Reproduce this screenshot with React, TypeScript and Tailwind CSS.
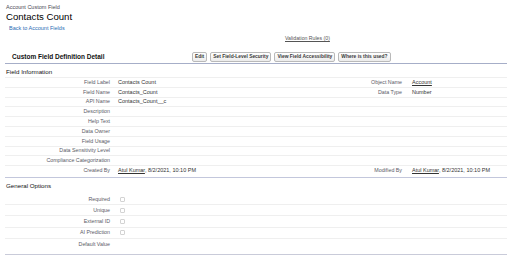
import React from 'react'

type Row = { label: string; value?: React.ReactNode; rlabel?: string; rvalue?: React.ReactNode }

const fieldRows: Row[] = [
  { label: 'Field Label', value: 'Contacts Count', rlabel: 'Object Name', rvalue: <span className="underline">Account</span> },
  { label: 'Field Name', value: 'Contacts_Count', rlabel: 'Data Type', rvalue: 'Number' },
  { label: 'API Name', value: 'Contacts_Count__c' },
  { label: 'Description' },
  { label: 'Help Text' },
  { label: 'Data Owner' },
  { label: 'Field Usage' },
  { label: 'Data Sensitivity Level' },
  { label: 'Compliance Categorization' },
  {
    label: 'Created By',
    value: <><span className="underline">Atul Kumar</span>, 8/2/2021, 10:10 PM</>,
    rlabel: 'Modified By',
    rvalue: <><span className="underline">Atul Kumar</span>, 8/2/2021, 10:10 PM</>,
  },
]

const optionRows = ['Required', 'Unique', 'External ID', 'AI Prediction', 'Default Value']

function Btn({ children }: { children: React.ReactNode }) {
  return (
    <button className="h-[10px] px-[2px] text-[4.9px] leading-[8px] font-bold text-[#3a3a3a] border border-[#b9b9b9] rounded-[2px] bg-gradient-to-b from-[#ffffff] to-[#ececec]">
      {children}
    </button>
  )
}

export default function App() {
  return (
    <div className="w-[512px] h-[256px] overflow-hidden bg-white font-['Liberation_Sans',Arial,sans-serif] text-black pt-[4px]">
      <div className="pl-[6px] text-[5.5px] leading-[6px] text-[#4a4a56]">Account Custom Field</div>
      <div className="pl-[6px] mt-[1px] text-[9.6px] leading-[11px]">Contacts Count</div>
      <div className="pl-[9px] mt-[2.5px] text-[5.5px] leading-[6px] text-[#2a6bb3]">Back to Account Fields</div>
      <div className="pl-[285px] mt-[4.5px] text-[5.2px] leading-[6px] text-[#555] underline">Validation Rules (0)</div>

      <div className="mx-[5px] mt-[9px]">
        <div className="flex items-center h-[14px] border-b border-[#a6aec8]">
          <div className="w-[187px] pl-[7px] text-[6.5px] font-bold leading-[8px] text-[#111]">Custom Field Definition Detail</div>
          <div className="flex gap-[3px]">
            <Btn>Edit</Btn>
            <Btn>Set Field-Level Security</Btn>
            <Btn>View Field Accessibility</Btn>
            <Btn>Where is this used?</Btn>
          </div>
        </div>

        <div className="pl-[1px] mt-[4px] text-[6.2px] leading-[8px] text-[#111]">Field Information</div>
        <div className="mt-[1px]">
          {fieldRows.map((r) => (
            <div key={r.label} className="flex items-center h-[9.8px] border-t border-[#efefef] text-[5.5px] leading-[7px]">
              <div className="w-[105px] text-right text-[5.3px] text-[#5a5a66]">{r.label}</div>
              <div className="w-[200px] pl-[8px] text-[#333]">{r.value}</div>
              <div className="w-[92px] text-right text-[5.3px] text-[#5a5a66]">{r.rlabel}</div>
              <div className="flex-1 pl-[10px] text-[#333]">{r.rvalue}</div>
            </div>
          ))}
        </div>
        <div className="h-[3px] border-b border-[#c3c7dc]" />

        <div className="pl-[1px] mt-[4px] text-[6.2px] leading-[8px] text-[#111]">General Options</div>
        <div className="mt-[4px] divide-y divide-[#efefef]">
          {optionRows.map((l) => (
            <div key={l} className="flex items-center h-[11.2px]">
              <div className="w-[105px] text-right text-[5.3px] leading-[7px] text-[#5a5a66]">{l}</div>
              <div className="pl-[10px]">
                {l !== 'Default Value' && <div className="w-[5px] h-[5px] border border-[#d3d3d3] rounded-[1px] bg-white" />}
              </div>
            </div>
          ))}
        </div>
        <div className="h-[5px] border-b border-[#c9cbd9]" />
      </div>
    </div>
  )
}
